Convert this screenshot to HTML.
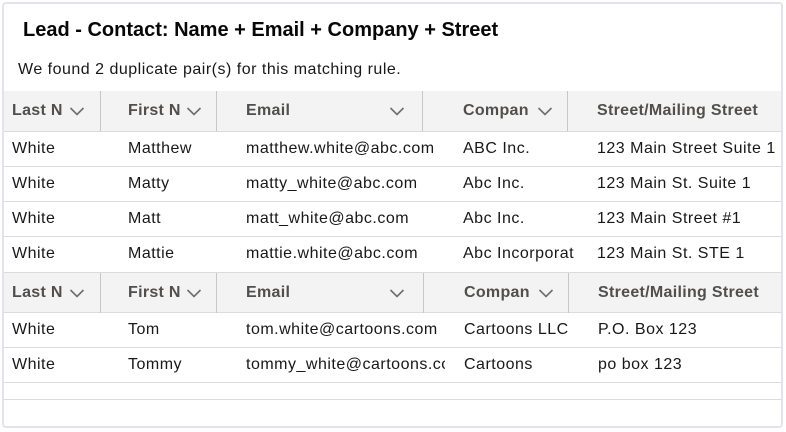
<!DOCTYPE html>
<html><head><style>
*{margin:0;padding:0;box-sizing:border-box}
body{width:786px;height:432px;background:#fff;font-family:"Liberation Sans",sans-serif;position:relative;overflow:hidden;color:#181818}
.card{position:absolute;left:2px;top:2px;width:781px;height:426px;border:2px solid #e3e3ee;border-radius:4px;overflow:hidden}
.t{position:absolute;left:19px;top:15px;font-size:20px;font-weight:bold;color:#080707}
.s{position:absolute;left:14px;top:57px;font-size:16px;letter-spacing:.5px;color:#181818}
.hd{position:absolute;left:0;width:781px;height:41px;background:#f3f3f3;border-bottom:1px solid #dddbda}
.row{position:absolute;left:0;width:781px;height:35px;border-bottom:1px solid #dddbda}
.c{position:absolute;top:0;line-height:34px;font-size:16px;letter-spacing:.5px;white-space:nowrap;overflow:hidden}
.hd .c{line-height:40px;font-weight:bold;color:#514f4d;letter-spacing:.3px}
.dv{position:absolute;top:0;width:1px;height:40px;background:#c9c7c5}
.ch{position:absolute;top:13px;width:16px;height:14px}
</style></head><body>
<div class="card">
<div class="t">Lead - Contact: Name + Email + Company + Street</div>
<div class="s">We found 2 duplicate pair(s) for this matching rule.</div>

<div class="hd" style="top:87px">
<div class="c" style="left:8px">Last N</div>
<svg class="ch" style="left:65px" viewBox="0 0 16 14"><path d="M1.5 4l6.5 6.5 6.5-6.5" fill="none" stroke="#706e6b" stroke-width="1.6"/></svg>
<div class="dv" style="left:96px"></div>
<div class="c" style="left:124px">First N</div>
<svg class="ch" style="left:182px" viewBox="0 0 16 14"><path d="M1.5 4l6.5 6.5 6.5-6.5" fill="none" stroke="#706e6b" stroke-width="1.6"/></svg>
<div class="dv" style="left:212px"></div>
<div class="c" style="left:242px">Email</div>
<svg class="ch" style="left:385px" viewBox="0 0 16 14"><path d="M1.5 4l6.5 6.5 6.5-6.5" fill="none" stroke="#706e6b" stroke-width="1.6"/></svg>
<div class="dv" style="left:418px"></div>
<div class="c" style="left:459px">Compan</div>
<svg class="ch" style="left:533px" viewBox="0 0 16 14"><path d="M1.5 4l6.5 6.5 6.5-6.5" fill="none" stroke="#706e6b" stroke-width="1.6"/></svg>
<div class="dv" style="left:563px"></div>
<div class="c" style="left:593px">Street/Mailing Street</div>
</div>

<div class="row" style="top:128px"><div class="c" style="left:8px">White</div><div class="c" style="left:124px">Matthew</div><div class="c" style="left:242px;width:196px">matthew.white@abc.com</div><div class="c" style="left:459px;width:115px">ABC Inc.</div><div class="c" style="left:593px">123 Main Street Suite 1</div></div>
<div class="row" style="top:163px"><div class="c" style="left:8px">White</div><div class="c" style="left:124px">Matty</div><div class="c" style="left:242px;width:196px">matty_white@abc.com</div><div class="c" style="left:459px;width:115px">Abc Inc.</div><div class="c" style="left:593px">123 Main St. Suite 1</div></div>
<div class="row" style="top:198px"><div class="c" style="left:8px">White</div><div class="c" style="left:124px">Matt</div><div class="c" style="left:242px;width:196px">matt_white@abc.com</div><div class="c" style="left:459px;width:115px">Abc Inc.</div><div class="c" style="left:593px">123 Main Street #1</div></div>
<div class="row" style="top:233px;border-bottom:none"><div class="c" style="left:8px">White</div><div class="c" style="left:124px">Mattie</div><div class="c" style="left:242px;width:196px">mattie.white@abc.com</div><div class="c" style="left:459px;width:115px">Abc Incorporat</div><div class="c" style="left:593px">123 Main St. STE 1</div></div>

<div class="hd" style="top:268px;border-top:1px solid #dddbda">
<div class="c" style="left:8px">Last N</div>
<svg class="ch" style="left:65px" viewBox="0 0 16 14"><path d="M1.5 4l6.5 6.5 6.5-6.5" fill="none" stroke="#706e6b" stroke-width="1.6"/></svg>
<div class="dv" style="left:96px"></div>
<div class="c" style="left:124px">First N</div>
<svg class="ch" style="left:182px" viewBox="0 0 16 14"><path d="M1.5 4l6.5 6.5 6.5-6.5" fill="none" stroke="#706e6b" stroke-width="1.6"/></svg>
<div class="dv" style="left:212px"></div>
<div class="c" style="left:242px">Email</div>
<svg class="ch" style="left:385px" viewBox="0 0 16 14"><path d="M1.5 4l6.5 6.5 6.5-6.5" fill="none" stroke="#706e6b" stroke-width="1.6"/></svg>
<div class="dv" style="left:419px"></div>
<div class="c" style="left:460px">Compan</div>
<svg class="ch" style="left:534px" viewBox="0 0 16 14"><path d="M1.5 4l6.5 6.5 6.5-6.5" fill="none" stroke="#706e6b" stroke-width="1.6"/></svg>
<div class="dv" style="left:564px"></div>
<div class="c" style="left:594px">Street/Mailing Street</div>
</div>

<div class="row" style="top:309px"><div class="c" style="left:8px">White</div><div class="c" style="left:124px">Tom</div><div class="c" style="left:242px;width:198px">tom.white@cartoons.com</div><div class="c" style="left:460px;width:115px">Cartoons LLC</div><div class="c" style="left:594px">P.O. Box 123</div></div>
<div class="row" style="top:344px"><div class="c" style="left:8px">White</div><div class="c" style="left:124px">Tommy</div><div class="c" style="left:242px;width:199px">tommy_white@cartoons.com</div><div class="c" style="left:460px;width:115px">Cartoons</div><div class="c" style="left:594px">po box 123</div></div>
<div class="row" style="top:379px;height:17px"></div>
</div>
</body></html>
